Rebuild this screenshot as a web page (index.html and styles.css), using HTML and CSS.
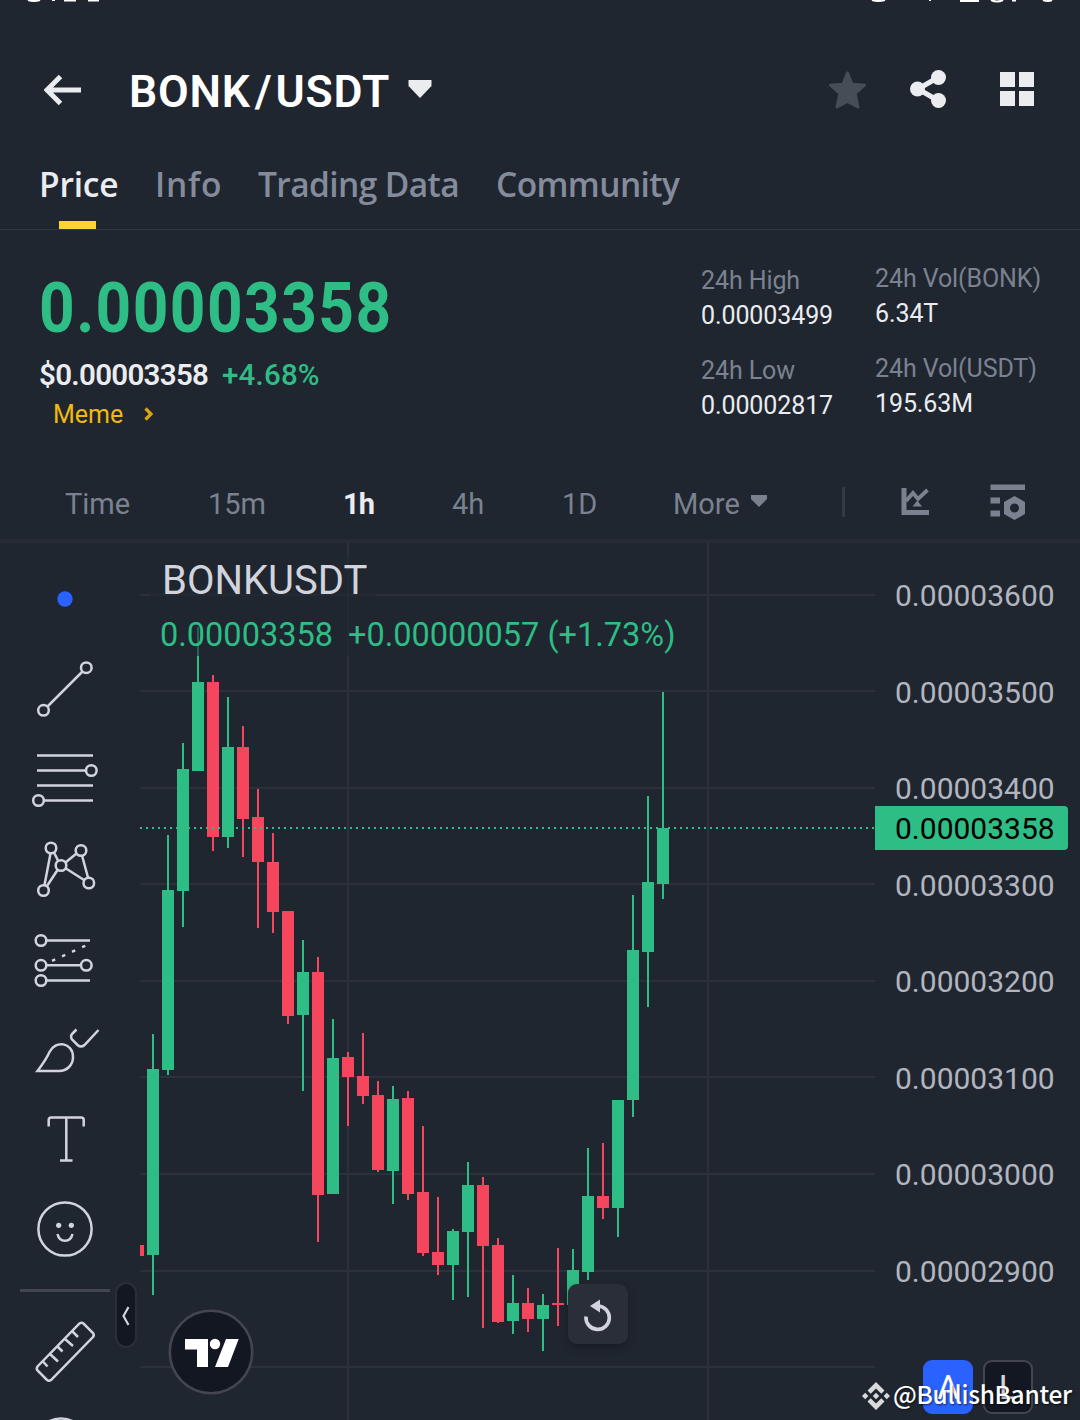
FILE: index.html
```html
<!DOCTYPE html>
<html lang="en">
<head>
  <meta charset="UTF-8">
  <title>BONK/USDT</title>
  <meta name="viewport" content="width=device-width, initial-scale=1.0">
  <link rel="stylesheet" href="styles.css">
</head>
<body>

  <svg class="status" viewBox="0 0 1080 4">
    <path d="M28 0q6 2 12 0M872 0q6 2 13 0M991 0q6 3 12 0M1043 0q5 2 9 0" fill="none" stroke="#fff" stroke-width="2"/>
    <path d="M52 0h3v1h-3zM64 0h12v1.500h-12zM88 0h11v1.500h-11zM929 0h2v1h-2zM960 0h19v2h-19zM1012 0h4v1.500h-4z" fill="#fff"/>
  </svg>

  <header>
    <svg class="back" width="38" height="32" viewBox="0 0 38 32">
      <path d="M16.500 2.500L3 16l13.500 13.500M3 16h34" fill="none" stroke="#eaecef" stroke-width="5"/>
    </svg>
    <h1>BONK<span>/</span>USDT</h1>
    <svg class="caret" width="24" height="18" viewBox="0 0 24 18">
      <path d="M0.500 0h23v6L12 18 0.500 6z" fill="#eaecef"/>
    </svg>
    <div class="actions">
      <svg width="38" height="40" viewBox="0 0 38 40">
        <path d="M19.500 4l4.600 11.200 12.400 1-9.400 8.100 2.900 13.700-10.500-5.500L9 38l2.900-13.700-9.400-8.100 12.400-1z" fill="#474d57" stroke="#474d57" stroke-width="3" stroke-linejoin="round"/>
      </svg>
      <svg width="36" height="40" viewBox="0 0 36 40">
        <path d="M28 8.500L8 20l20 11.500" fill="none" stroke="#eaecef" stroke-width="5"/>
        <circle cx="28.500" cy="8.500" r="7.500" fill="#eaecef"/>
        <circle cx="7.500" cy="20" r="7.500" fill="#eaecef"/>
        <circle cx="28.500" cy="31.500" r="7.500" fill="#eaecef"/>
      </svg>
      <svg width="34" height="34" viewBox="0 0 34 34">
        <path d="M0 0h15v15H0zM19 0h15v15H19zM0 19h15v15H0zM19 19h15v15H19z" fill="#eaecef"/>
      </svg>
    </div>
  </header>

  <nav>
    <a class="active">Price</a>
    <a class="info-tab">Info</a>
    <a class="data-tab">Trading Data</a>
    <a class="comm-tab">Community</a>
  </nav>

  <section class="ticker">
    <div class="price">
      <div class="last"><span>0.00003358</span></div>
      <div class="fiat"><b>$0.00003358</b><span>+4.68%</span></div>
      <div class="tag">Meme
        <svg width="10" height="14" viewBox="0 0 10 14"><path d="M1.500 1.500L7 7l-5.500 5.500" fill="none" stroke="#d9a514" stroke-width="3.200"/></svg>
      </div>
    </div>
    <dl class="stats">
      <dt>24h High</dt><dd>0.00003499</dd>
      <dt>24h Low</dt><dd>0.00002817</dd>
    </dl>
    <dl class="stats vol">
      <dt>24h Vol(BONK)</dt><dd>6.34T</dd>
      <dt>24h Vol(USDT)</dt><dd>195.63M</dd>
    </dl>
  </section>

  <div class="intervals">
    <span>Time</span>
    <span>15m</span>
    <span class="on">1h</span>
    <span>4h</span>
    <span>1D</span>
    <span>More</span>
    <svg class="more-caret" width="16" height="12" viewBox="0 0 16 12"><path d="M0 0h16v4L8 12 0 4z" fill="#7b828f"/></svg>
    <i class="divider"></i>
    <svg class="ind" width="28" height="28" viewBox="0 0 28 28">
      <path d="M3 0v24.500h25" fill="none" stroke="#7b828f" stroke-width="5"/>
      <path d="M5 13l7-8 5 6 9.500-9" fill="none" stroke="#7b828f" stroke-width="3.800"/>
      <path d="M11.500 18.500h9.500l-4.700-6z" fill="#7b828f"/>
    </svg>
    <svg class="ind" width="36" height="36" viewBox="0 0 36 36">
      <path d="M0.500 0.500h34.500v5.500H0.500zM0.500 13.500H10v6H0.500zM0.500 26.500H10v6H0.500z" fill="#7b828f"/>
      <path d="M24.500 12l10.500 6v12l-10.500 6L14 30V18zM24.500 19.500a4.500 4.500 0 1 0 0 9 4.500 4.500 0 1 0 0-9z" fill="#7b828f" fill-rule="evenodd"/>
    </svg>
  </div>

  <main>
    <div class="tools">
      <svg class="tool" viewBox="0 0 130 90"><circle class="dot" cx="65" cy="45" r="7.700"/></svg>
      <svg class="tool" viewBox="0 0 130 90">
        <path d="M47.500 62.500L82.500 27.500"/>
        <circle cx="43.500" cy="66.300" r="5.300"/><circle cx="86.300" cy="23.700" r="5.300"/>
      </svg>
      <svg class="tool" viewBox="0 0 130 90">
        <path d="M37 21.500h56M37 36.500h49M37 51.500h56M44 66.500h49"/>
        <circle cx="91.300" cy="36.500" r="5.300"/><circle cx="38.500" cy="66.500" r="5.300"/>
      </svg>
      <svg class="tool" viewBox="0 0 130 90">
        <path d="M50.500 29.500L44.500 61M54 28.500l4 8M57.500 46L47 62M65.500 38.500l11-9M82 31.500l6 22M66 44.500l18 11.500"/>
        <circle cx="51" cy="24" r="5.300"/><circle cx="81" cy="26.500" r="5.300"/><circle cx="61" cy="41.500" r="5.300"/>
        <circle cx="43.500" cy="66.500" r="5.300"/><circle cx="88.800" cy="59" r="5.300"/>
      </svg>
      <svg class="tool" viewBox="0 0 130 90">
        <path d="M47 26.500h43M47 51.300h34M47 66.500h43"/>
        <path d="M52 46.800L87 31" stroke-dasharray="3.500 7.500"/>
        <circle cx="41" cy="26.500" r="5.300"/><circle cx="41" cy="51.300" r="5.300"/><circle cx="86.300" cy="51.300" r="5.300"/><circle cx="41" cy="66.500" r="5.300"/>
      </svg>
      <svg class="tool" viewBox="0 0 130 90">
        <path d="M37.500 67C42 61 46.500 55 49.500 48 55 36 73 38 73 53c0 8-6 14-14 14z"/>
        <path d="M76.500 25.500l-4 4q-3 3 0 6.500l5 5q3.500 3 7 0l14-15"/>
      </svg>
      <svg class="tool" viewBox="0 0 130 90">
        <path d="M48.700 32.500V26q0-2.500 2.500-2.500h30q2.500 0 2.500 2.500v6.500M66.300 24v42.500M60 66.500h12.500"/>
      </svg>
      <svg class="tool" viewBox="0 0 130 90">
        <circle cx="65" cy="45" r="26.600"/>
        <path d="M57.500 50c2 9 13 9 15 0"/>
        <circle class="eye" cx="58.700" cy="41.300" r="2.600"/><circle class="eye" cx="71.300" cy="41.300" r="2.600"/>
      </svg>
      <hr>
      <svg class="tool" viewBox="0 0 130 90">
        <path d="M79.500 16.500q2-1.500 4 0L93 26q1.500 2 0 4L51 73q-2 1.500-4 0L37.500 63.500q-1.500-2 0-4zM43 54.500l4.500 5M50 47l8 7.500M57.500 39.500l5 5M65 32l8 7M72.500 24.500l5.500 5.500"/>
      </svg>
      <svg class="tool" viewBox="0 0 130 90"><circle cx="61" cy="47.500" r="26"/></svg>
    </div>

    <div class="chart">
      <svg id="candles" width="735" height="877" viewBox="140 543 735 877">
        <path class="grid" d="M140 595h735M140 691h735M140 788h735M140 884h735M140 981h735M140 1077h735M140 1174h735M140 1271h735M140 1367h735M348 543v877M708 543v877"/>
        <g id="bars"></g>
        <path class="last-line" d="M140 828h735"/>
      </svg>

      <div class="legend">
        <div class="symbol">BONKUSDT</div>
        <div class="change"><span>0.00003358</span><span>+0.00000057 (+1.73%)</span></div>
      </div>

      <svg class="tv" width="86" height="86" viewBox="0 0 86 86">
        <circle cx="43" cy="43" r="41.200" fill="#131722" stroke="#434651" stroke-width="2.600"/>
        <path d="M17 30h23v28H29V40.500H17zM58 30h12.700L60 58H47z" fill="#fff"/>
        <circle cx="47" cy="35" r="5.200" fill="#fff"/>
      </svg>

      <div class="reset">
        <svg width="30" height="34" viewBox="0 0 30 34">
          <path d="M3 18.500A11.700 11.700 0 1 0 14.500 8" fill="none" stroke="#d1d4dc" stroke-width="3.600"/>
          <path d="M7 8l10-6.500v13z" fill="#d1d4dc"/>
        </svg>
      </div>
    </div>

    <div class="axis">
      <span>0.00003600</span>
      <span>0.00003500</span>
      <span>0.00003400</span>
      <span>0.00003300</span>
      <span>0.00003200</span>
      <span>0.00003100</span>
      <span>0.00003000</span>
      <span>0.00002900</span>
      <b class="last-tag">0.00003358</b>
      <div class="scale"><i class="auto">A</i><i>L</i></div>
    </div>

    <div class="collapse">
      <svg width="8" height="20" viewBox="0 0 8 20"><path d="M6.500 1L1.500 10l5 9" fill="none" stroke="#d1d4dc" stroke-width="2.200"/></svg>
    </div>
  </main>

  <div class="watermark">
    <svg width="28" height="28" viewBox="0 0 28 28">
      <path d="M14 0l8.500 8.500-3.200 3.200L14 6.400l-5.300 5.300-3.200-3.200zM14 28l8.500-8.500-3.200-3.200-5.300 5.300-5.300-5.300-3.200 3.200zM14 10.800l3.200 3.200-3.200 3.200-3.200-3.200zM3.200 10.800L6.400 14l-3.200 3.200L0 14zM24.800 10.800L28 14l-3.200 3.200-3.200-3.200z" fill="#d9dadc"/>
    </svg>
    <span>@BullishBanter</span>
  </div>

  <script src="script.js"></script>
</body>
</html>
```

FILE: styles.css
```css
* {
  box-sizing: border-box;
}

body {
  margin: 0;
  width: 1080px;
  height: 1420px;
  overflow: hidden;
  position: relative;
  background: #202630;
  color: #eaecef;
  font-family: Roboto, "Liberation Sans", sans-serif;
}

svg {
  display: block;
  flex: none;
}

.status {
  width: 1080px;
  height: 4px;
}

header {
  display: flex;
  align-items: center;
  height: 136px;
  padding: 36px 46px 0 44px;
}

h1 {
  margin: 3px 0 0 47px;
  width: 262px;
  font-size: 44.500px;
  font-weight: 600;
  letter-spacing: 0.8px;
  line-height: 60px;
  color: #fff;
  white-space: nowrap;
}

h1 span {
  margin: 0 3px 0 4px;
}

.caret {
  margin: -2px 0 0 17px;
}

.actions {
  display: flex;
  align-items: center;
  margin-left: auto;
  margin-top: -2px;
}

.actions svg + svg {
  margin-left: 44px;
}

.actions svg:last-child {
  margin-left: 54px;
}

nav {
  display: flex;
  align-items: center;
  height: 90px;
  padding-left: 39px;
  border-bottom: 1px solid #333944;
  font-family: "Open Sans", sans-serif;
  font-size: 33.500px;
  font-weight: 600;
  letter-spacing: -0.6px;
  color: #848b9b;
}

nav a {
  position: relative;
  width: 116px;
  line-height: 89px;
  white-space: nowrap;
}

nav .active {
  letter-spacing: -0.2px;
  color: #eaecef;
}

nav .active::after {
  content: "";
  position: absolute;
  left: 20px;
  bottom: 0;
  width: 37px;
  height: 8px;
  background: #fcd535;
}

nav .info-tab {
  width: 103px;
  letter-spacing: 0.8px;
}

nav .data-tab {
  width: 238px;
}

.ticker {
  display: flex;
  height: 239px;
}

.price {
  width: 701px;
  padding: 42px 0 0 39px;
}

.last {
  height: 72px;
  font-size: 71px;
  font-weight: 700;
  line-height: 72px;
  color: #2ebd85;
}

.last span {
  display: inline-block;
  transform: scaleX(0.877);
  transform-origin: 0 0;
  letter-spacing: 1.6px;
}

.fiat {
  display: flex;
  margin-top: 11px;
  font-size: 29.500px;
  font-weight: 500;
  line-height: 40px;
}

.fiat b {
  width: 183px;
  font-weight: 600;
  letter-spacing: -0.7px;
}

.fiat span {
  color: #2ebd85;
  letter-spacing: 0.2px;
}

.tag {
  display: flex;
  align-items: center;
  gap: 21px;
  padding-left: 14px;
  font-size: 25px;
  line-height: 39px;
  color: #f0b90b;
}

.tag svg {
  margin-top: -2px;
}

.stats {
  width: 174px;
  margin: 0;
  padding-top: 32.500px;
  font-size: 25px;
  letter-spacing: -0.1px;
  line-height: 35px;
  white-space: nowrap;
}

.stats dt {
  color: #7b828f;
}

.stats dd {
  margin: 0 0 20px;
}

.vol {
  padding-top: 30.500px;
}

.intervals {
  display: grid;
  grid-template-columns: 143px 135px 109px 110px 111px 78px 91px 59px 89px 60px;
  align-items: center;
  height: 74px;
  padding-left: 65px;
  border-bottom: 4px solid #262b35;
  font-size: 29px;
  color: #7b828f;
}

.intervals .on {
  font-weight: 700;
  letter-spacing: -0.8px;
  color: #eaecef;
}

.more-caret {
  margin-top: -6px;
}

.divider {
  width: 3px;
  height: 30px;
  margin-top: -4px;
  background: #343a45;
}

.ind {
  margin-top: -4px;
}

main {
  display: flex;
  position: relative;
  height: 877px;
  overflow: hidden;
}

.tools {
  width: 140px;
  padding-top: 11px;
}

.tool {
  width: 130px;
  height: 90px;
  fill: none;
  stroke: #d1d4dc;
  stroke-width: 2.500;
}

.dot {
  fill: #2962ff;
  stroke: none;
}

.eye {
  fill: #d1d4dc;
  stroke: none;
}

.tools hr {
  width: 90px;
  height: 3px;
  margin: 15px 0 15px 20px;
  border: 0;
  background: #434651;
}

.chart {
  position: relative;
  width: 735px;
}

.grid {
  fill: none;
  stroke: #2c303a;
  stroke-width: 2;
}

.up {
  fill: #2ebd85;
}

.down {
  fill: #f6465d;
}

.last-line {
  stroke: #2ebd85;
  stroke-width: 2;
  stroke-dasharray: 2 4;
}

.legend {
  position: absolute;
  left: 10px;
  top: 13px;
  white-space: nowrap;
}

.symbol {
  width: 227px;
  padding-left: 12px;
  background: rgba(32, 38, 48, 0.6);
  font-size: 40px;
  line-height: 50px;
  color: #d1d4dc;
}

.change {
  display: flex;
  gap: 15px;
  height: 50px;
  padding: 4px 10px 0 10px;
  background: rgba(32, 38, 48, 0.6);
  font-size: 32.500px;
  line-height: 50px;
  color: #2ebd85;
}

.tv {
  position: absolute;
  left: 28px;
  top: 766px;
}

.reset {
  position: absolute;
  left: 428px;
  top: 741px;
  width: 60px;
  height: 60px;
  padding: 14px 0 0 15px;
  border-radius: 9px;
  background: #2a2e39;
  box-shadow: 0 3px 8px rgba(0, 0, 0, 0.3);
}

.axis {
  position: relative;
  display: flex;
  flex-direction: column;
  width: 205px;
  padding: 5px 0 0 20px;
  font-size: 30px;
  line-height: 96.500px;
  color: #b2b5be;
}

.last-tag {
  position: absolute;
  left: 0;
  top: 263px;
  width: 193px;
  height: 44px;
  padding-left: 20px;
  border-radius: 0 4px 4px 0;
  background: #2ebd85;
  color: #000;
  font-weight: 400;
  line-height: 45px;
}

.scale {
  display: flex;
  gap: 10px;
  margin: 40px 0 0 28px;
}

.scale i {
  width: 50px;
  height: 54px;
  border: 2px solid #434651;
  border-radius: 9px;
  background: #131722;
  color: #d1d4dc;
  font-size: 34px;
  font-style: normal;
  line-height: 50px;
  text-align: center;
}

.scale .auto {
  border-color: #2962ff;
  background: #2962ff;
  color: #fff;
}

.collapse {
  position: absolute;
  left: 115px;
  top: 739px;
  width: 22px;
  height: 66px;
  padding: 22px 0 0 5px;
  border: 2px solid #2a2e39;
  border-radius: 11px;
  background: #131722;
}

.watermark {
  position: absolute;
  left: 862px;
  top: 1376px;
  display: flex;
  align-items: center;
  gap: 3px;
  height: 40px;
  color: #fff;
  font-family: "Noto Sans CJK SC", "Noto Sans", sans-serif;
  font-size: 24.500px;
  font-weight: 500;
  letter-spacing: -0.3px;
  line-height: 40px;
  text-shadow: 1px 1px 2px rgba(0, 0, 0, 0.6);
}

.watermark span {
  margin-top: -4px;
}
```

FILE: script.js
```js
// x centre, high, body top, body bottom, low, direction
const candles = [
  [138, 1245, 1245, 1256, 1256, 'down'],
  [153, 1034, 1069, 1255, 1295, 'up'],
  [168, 835, 890, 1070, 1075, 'up'],
  [183, 743, 769, 891, 927, 'up'],
  [198, 627, 682, 771, 771, 'up'],
  [213, 675, 682, 837, 851, 'down'],
  [228, 697, 747, 837, 848, 'up'],
  [243, 726, 747, 819, 857, 'down'],
  [258, 789, 817, 862, 928, 'down'],
  [273, 833, 862, 912, 933, 'down'],
  [288, 911, 911, 1016, 1024, 'down'],
  [303, 940, 972, 1015, 1091, 'up'],
  [318, 957, 972, 1195, 1242, 'down'],
  [333, 1019, 1058, 1194, 1194, 'up'],
  [348, 1052, 1057, 1077, 1126, 'down'],
  [363, 1033, 1076, 1096, 1104, 'down'],
  [378, 1081, 1095, 1170, 1172, 'down'],
  [393, 1086, 1099, 1171, 1204, 'up'],
  [408, 1091, 1098, 1194, 1200, 'down'],
  [423, 1126, 1192, 1253, 1256, 'down'],
  [438, 1197, 1252, 1265, 1275, 'down'],
  [453, 1229, 1231, 1265, 1300, 'up'],
  [468, 1162, 1185, 1232, 1297, 'up'],
  [483, 1177, 1185, 1246, 1328, 'down'],
  [498, 1238, 1245, 1322, 1323, 'down'],
  [513, 1275, 1303, 1321, 1334, 'up'],
  [528, 1288, 1303, 1319, 1332, 'down'],
  [543, 1294, 1305, 1319, 1351, 'up'],
  [558, 1248, 1303, 1305, 1326, 'down'],
  [573, 1249, 1270, 1305, 1305, 'up'],
  [588, 1148, 1196, 1272, 1280, 'up'],
  [603, 1143, 1196, 1208, 1219, 'down'],
  [618, 1100, 1100, 1208, 1237, 'up'],
  [633, 895, 950, 1100, 1117, 'up'],
  [648, 796, 882, 952, 1007, 'up'],
  [663, 692, 828, 884, 899, 'up']
];

const bars = document.getElementById('bars');

function addRect(x, y, w, h, cls) {
  const rect = document.createElementNS('http://www.w3.org/2000/svg', 'rect');
  rect.setAttribute('x', x);
  rect.setAttribute('y', y);
  rect.setAttribute('width', w);
  rect.setAttribute('height', h);
  rect.setAttribute('class', cls);
  bars.appendChild(rect);
}

candles.forEach(([x, high, top, bottom, low, dir]) => {
  addRect(x - 1, high, 2, low - high, dir);
  addRect(x - 6, top, 12, bottom - top, dir);
});
```
